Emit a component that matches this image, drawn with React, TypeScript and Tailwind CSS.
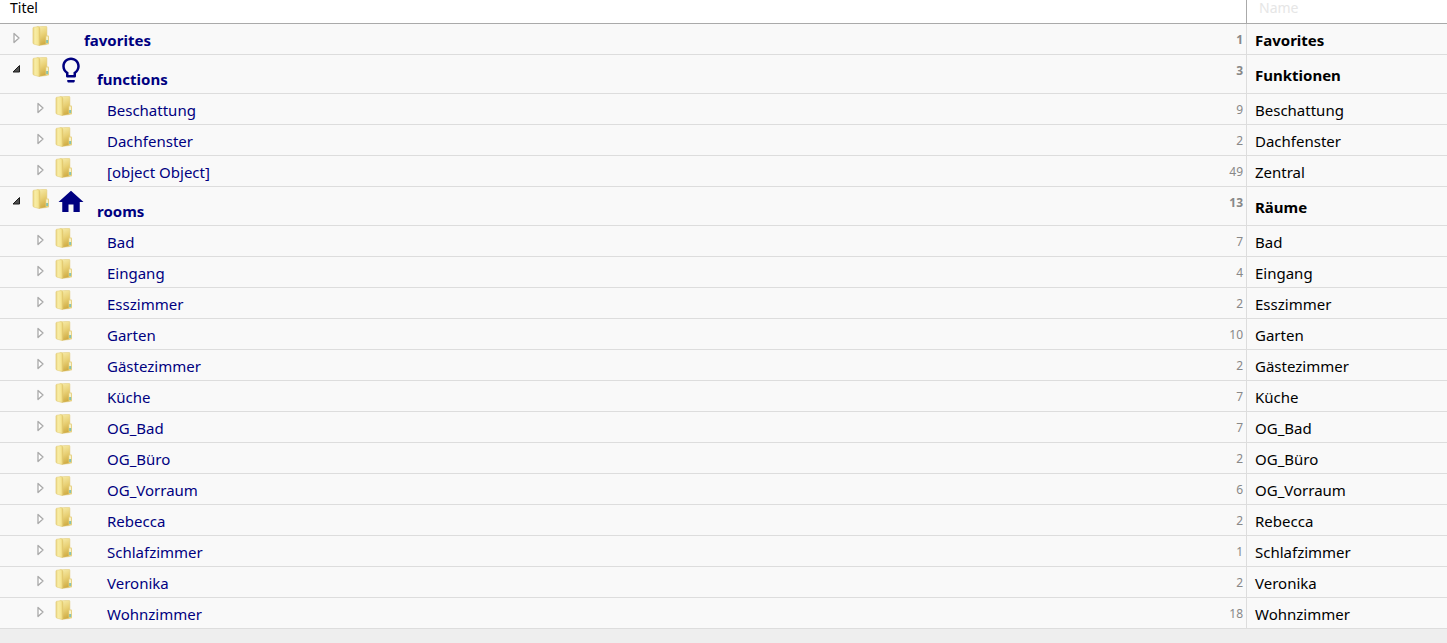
import React, { FC, useState } from "react";
import clsx from "clsx";

interface EnumItem {
  id: string;
  name: string;
  count: number;
}

interface EnumGroup extends EnumItem {
  icon?: "bulb" | "home";
  children: EnumItem[];
}

const groups: EnumGroup[] = [
  { id: "favorites", name: "Favorites", count: 1, children: [] },
  {
    id: "functions",
    name: "Funktionen",
    count: 3,
    icon: "bulb",
    children: [
      { id: "Beschattung", name: "Beschattung", count: 9 },
      { id: "Dachfenster", name: "Dachfenster", count: 2 },
      { id: "[object Object]", name: "Zentral", count: 49 },
    ],
  },
  {
    id: "rooms",
    name: "Räume",
    count: 13,
    icon: "home",
    children: [
      { id: "Bad", name: "Bad", count: 7 },
      { id: "Eingang", name: "Eingang", count: 4 },
      { id: "Esszimmer", name: "Esszimmer", count: 2 },
      { id: "Garten", name: "Garten", count: 10 },
      { id: "Gästezimmer", name: "Gästezimmer", count: 2 },
      { id: "Küche", name: "Küche", count: 7 },
      { id: "OG_Bad", name: "OG_Bad", count: 7 },
      { id: "OG_Büro", name: "OG_Büro", count: 2 },
      { id: "OG_Vorraum", name: "OG_Vorraum", count: 6 },
      { id: "Rebecca", name: "Rebecca", count: 2 },
      { id: "Schlafzimmer", name: "Schlafzimmer", count: 1 },
      { id: "Veronika", name: "Veronika", count: 2 },
      { id: "Wohnzimmer", name: "Wohnzimmer", count: 18 },
    ],
  },
];

const FolderIcon = () => (
  <svg className="h-5 w-[18px] shrink-0" viewBox="0 0 18 20" aria-hidden="true">
    <defs>
      <linearGradient id="folder-front" x1="0" x2="1" y1="0" y2="0">
        <stop offset="0" stopColor="#e6cf78" />
        <stop offset="0.3" stopColor="#f8eda6" />
        <stop offset="0.75" stopColor="#f5e593" />
        <stop offset="1" stopColor="#dfc25c" />
      </linearGradient>
      <linearGradient id="folder-back" x1="0.2" x2="0.5" y1="0" y2="1">
        <stop offset="0" stopColor="#f7ecaa" />
        <stop offset="0.5" stopColor="#e9d176" />
        <stop offset="1" stopColor="#cfab42" />
      </linearGradient>
    </defs>
    <path d="M5 .8 13.800 .3q1.100 0 1.100 1V17.600q0 .9-.9 1L7 19.400z" fill="url(#folder-back)" stroke="#e0ca7c" strokeWidth=".5" />
    <path d="M13.600 9.500h2.400q1 0 1 1.200v6.800q0 1-1 1h-2.400z" fill="#e6d080" />
    <path d="M14.200 10.500h1.900v3.500h-1.900z" fill="#f8f3cc" />
    <path d="M14.200 14h1.900v3h-1.900z" fill="#86c3b4" />
    <path d="M1.800 1.200 6 .6q1.800.3 1.900 2V18q0 1.800-1.400 1.400L2 18.200Q.9 17.800.9 17V2.200q0-.9.9-1z" fill="url(#folder-front)" stroke="#e0ca7c" strokeWidth=".5" />
  </svg>
);

const BulbIcon = () => (
  <svg className="h-[30px] w-[30px]" viewBox="0 0 24 24" fill="#000080" aria-hidden="true">
    <path d="M9 21c0 .5.4 1 1 1h4c.6 0 1-.5 1-1v-1H9v1zm3-19C8.1 2 5 5.1 5 9c0 2.4 1.2 4.500 3 5.700V17c0 .5.4 1 1 1h6c.6 0 1-.5 1-1v-2.300c1.800-1.300 3-3.400 3-5.700 0-3.900-3.100-7-7-7zm2.900 11.100l-.9.600V16h-4v-2.300l-.9-.600C7.800 12.200 7 10.600 7 9c0-2.800 2.200-5 5-5s5 2.200 5 5c0 1.600-.8 3.200-2.100 4.100z" />
  </svg>
);

const HomeIcon = () => (
  <svg className="h-[30px] w-[30px]" viewBox="0 0 24 24" fill="#000080" aria-hidden="true">
    <path d="M10 20v-6h4v6h5v-8h3L12 3 2 12h3v8z" />
  </svg>
);

interface TreeRowProps {
  item: EnumItem;
  icon?: "bulb" | "home";
  child?: boolean;
  open?: boolean;
  onToggle?: () => void;
}

const TreeRow: FC<TreeRowProps> = ({ item, icon, child, open, onToggle }) => {
  return (
    <tr className={clsx("bg-[#f9f9f9]", !child && "font-bold")}>
      <td className="border-r border-b border-[#dddddd] p-0">
        <div className={clsx("flex items-start pr-[3px]", icon ? "h-[38px]" : "h-[30px]", child ? "pl-8" : "pl-2")}>
          <button
            type="button"
            onClick={onToggle}
            aria-expanded={!!open}
            aria-label={`Toggle ${item.id}`}
            className="mt-1.5 h-4 w-4 shrink-0"
          >
            <svg className="h-4 w-4" viewBox="0 0 16 16" aria-hidden="true">
              {open ? (
                <path d="M11.500 4.500v6.500H5z" fill="#505050" stroke="#1c1c1c" strokeLinejoin="round" />
              ) : (
                <path d="M6 3.500v9l5-4.500z" fill="#fff" stroke="#aaa" strokeWidth="1.300" strokeLinejoin="round" />
              )}
            </svg>
          </button>
          <span className={clsx("mt-0.5", child ? "ml-[7px]" : "ml-2")}>
            <FolderIcon />
          </span>
          {icon && (
            <span className="ml-1.5">
              {icon === "bulb" ? <BulbIcon /> : <HomeIcon />}
            </span>
          )}
          <span
            className={clsx(
              "leading-5 text-[#000080]",
              icon ? "mt-3.5 ml-[11px]" : "mt-1.5 ml-[34px]"
            )}
          >
            {item.id}
          </span>
          <span className="mt-1.5 ml-auto text-xs leading-5 text-[#888888]">
            {item.count}
          </span>
        </div>
      </td>
      <td className="border-b border-[#dddddd] pt-0.5 pr-2 pb-0 pl-2 leading-5">
        {item.name}
      </td>
    </tr>
  );
};

const App = () => {
  const [opened, setOpened] = useState<string[]>(["functions", "rooms"]);
  const [filter, setFilter] = useState("");

  const toggle = (id: string) => {
    setOpened((prev) =>
      prev.includes(id) ? prev.filter((x) => x !== id) : [...prev, id]
    );
  };

  const matches = (item: EnumItem) =>
    item.name.toLowerCase().includes(filter.toLowerCase());

  return (
    <div className="min-h-screen bg-[#eeeeee] font-['Noto_Sans',sans-serif] text-[15px] text-black">
      <table className="w-full table-fixed border-separate border-spacing-0">
        <colgroup>
          <col />
          <col className="w-[200px]" />
        </colgroup>
        <thead>
          <tr className="bg-white text-left align-top text-sm">
            <th className="h-6 border-r border-b border-[#aaaaaa] py-0 pl-2.5 leading-4 font-normal">
              Titel
            </th>
            <th className="h-6 border-b border-[#aaaaaa] py-0 pl-3 font-normal">
              <input
                type="text"
                aria-label="Name"
                placeholder="Name"
                value={filter}
                onChange={(e) => setFilter(e.target.value)}
                className="block h-4 w-full leading-4 outline-none placeholder:text-[#e6e6e6]"
              />
            </th>
          </tr>
        </thead>
        <tbody>
          {groups.map((group) => {
            const open = opened.includes(group.id);
            return (
              <React.Fragment key={group.id}>
                <TreeRow
                  item={group}
                  icon={group.icon}
                  open={open}
                  onToggle={() => toggle(group.id)}
                />
                {open &&
                  group.children
                    .filter(matches)
                    .map((item) => <TreeRow key={item.id} item={item} child />)}
              </React.Fragment>
            );
          })}
        </tbody>
      </table>
    </div>
  );
};

export default App;
